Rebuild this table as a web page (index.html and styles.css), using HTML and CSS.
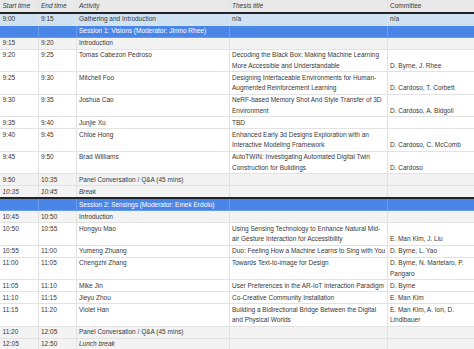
FILE: index.html
```html
<!DOCTYPE html>
<html lang="en">
<head>
  <meta charset="UTF-8">
  <title>Schedule</title>
  <link rel="stylesheet" href="styles.css">
</head>
<body>
  <table class="schedule">
    <colgroup>
      <col class="col-time">
      <col class="col-time">
      <col class="col-activity">
      <col class="col-thesis">
      <col class="col-committee">
    </colgroup>
    <thead>
      <tr class="head">
        <th class="it">Start time</th>
        <th class="it">End time</th>
        <th class="it">Activity</th>
        <th class="it">Thesis title</th>
        <th>Committee</th>
      </tr>
    </thead>
    <tbody>
      <tr class="highlight">
        <td>9:00</td><td>9:15</td><td>Gathering and Introduction</td><td>n/a</td><td>n/a</td>
      </tr>
      <tr class="session">
        <td></td><td></td><td>Session 1: Visions (Moderator: Jinmo Rhee)</td><td></td><td></td>
      </tr>
      <tr class="grey">
        <td>9:15</td><td>9:20</td><td>Introduction</td><td></td><td></td>
      </tr>
      <tr>
        <td>9:20</td><td>9:25</td><td>Tomas Cabezon Pedroso</td><td>Decoding the Black Box: Making Machine Learning More Accessible and Understandable</td><td class="bottom">D. Byrne, J. Rhee</td>
      </tr>
      <tr>
        <td>9:25</td><td>9:30</td><td>Mitchell Foo</td><td>Designing Interfaceable Environments for Human-Augmented Reinforcement Learning</td><td class="bottom">D. Cardoso, T. Corbett</td>
      </tr>
      <tr>
        <td>9:30</td><td>9:35</td><td>Joshua Cao</td><td>NeRF-based Memory Shot And Style Transfer of 3D Environment</td><td class="bottom">D. Cardoso, A. Bidgoli</td>
      </tr>
      <tr>
        <td>9:35</td><td>9:40</td><td>Junjie Xu</td><td>TBD</td><td></td>
      </tr>
      <tr>
        <td>9:40</td><td>9:45</td><td>Chloe Hong</td><td>Enhanced Early 3d Designs Exploration with an Interactive Modeling Framework</td><td class="bottom">D. Cardoso, C. McComb</td>
      </tr>
      <tr>
        <td>9:45</td><td>9:50</td><td>Brad Williams</td><td>AutoTWIN: Investigating Automated Digital Twin Construction for Buildings</td><td class="bottom">D. Cardoso</td>
      </tr>
      <tr class="grey">
        <td>9:50</td><td>10:35</td><td>Panel Conversation / Q&amp;A (45 mins)</td><td></td><td></td>
      </tr>
      <tr class="grey it">
        <td>10:35</td><td>10:45</td><td>Break</td><td></td><td></td>
      </tr>
      <tr class="session split">
        <td></td><td></td><td>Session 2: Sensings (Moderator: Emek Erdolu)</td><td></td><td></td>
      </tr>
      <tr class="grey">
        <td>10:45</td><td>10:50</td><td>Introduction</td><td></td><td></td>
      </tr>
      <tr>
        <td>10:50</td><td>10:55</td><td>Hongyu Mao</td><td>Using Sensing Technology to Enhance Natural Mid-air Gesture Interaction for Accessibility</td><td class="bottom">E. Man Kim, J. Liu</td>
      </tr>
      <tr>
        <td>10:55</td><td>11:00</td><td>Yumeng Zhuang</td><td class="nowrap">Duo: Feeling How a Machine Learns to Sing with You</td><td class="bottom">D. Byrne, L. Yao</td>
      </tr>
      <tr>
        <td>11:00</td><td>11:05</td><td>Chengzhi Zhang</td><td>Towards Text-to-image for Design</td><td class="bottom">D. Byrne, N. Martelaro, P. Pangaro</td>
      </tr>
      <tr>
        <td>11:05</td><td>11:10</td><td>Mike Jin</td><td>User Preferences in the AR-IoT Interaction Paradigm</td><td class="bottom">D. Byrne</td>
      </tr>
      <tr>
        <td>11:10</td><td>11:15</td><td>Jieyu Zhou</td><td>Co-Creative Community Installation</td><td class="bottom">E. Man Kim</td>
      </tr>
      <tr>
        <td>11:15</td><td>11:20</td><td>Violet Han</td><td>Building a Bidirectional Bridge Between the Digital and Physical Worlds</td><td class="bottom">E. Man Kim, A. Ion, D. Lindlbauer</td>
      </tr>
      <tr class="grey">
        <td>11:20</td><td>12:05</td><td>Panel Conversation / Q&amp;A (45 mins)</td><td></td><td></td>
      </tr>
      <tr class="grey">
        <td>12:05</td><td>12:50</td><td class="it">Lunch break</td><td></td><td></td>
      </tr>
    </tbody>
  </table>
</body>
</html>
```

FILE: styles.css
```css
html, body {
  margin: 0;
  padding: 0;
  background-color: #fff;
  overflow: hidden;
}

.schedule {
  width: 474px;
  table-layout: fixed;
  border-collapse: collapse;
  font-family: 'Liberation Sans', Arial, sans-serif;
  font-size: 6.5px;
  line-height: 10.5px;
  color: #383838;
}

.col-time {
  width: 38px;
}

.col-activity {
  width: 153px;
}

.col-thesis {
  width: 158px;
}

.col-committee {
  width: 87px;
}

.schedule th,
.schedule td {
  padding: 0.25px 1px 0.25px 2.5px;
  border: 1px solid #e2e2e2;
  border-top: none;
  text-align: left;
  vertical-align: top;
  font-weight: normal;
  overflow: hidden;
}

.schedule tr > :first-child {
  border-left: none;
}

.head th {
  background-color: #e9e9e9;
  padding-top: 1px;
  border-bottom: 2px solid #222;
}

.it {
  font-style: italic;
}

.nowrap {
  white-space: nowrap;
}

.highlight td {
  background-color: #cfe2f3;
}

.session td {
  background-color: #4a86e8;
  color: #fff;
  border-color: #6a9cee;
}

.split td {
  border-top: 2px solid #222;
}

.grey td {
  background-color: #f3f3f3;
}

.schedule .bottom {
  vertical-align: bottom;
}
```
